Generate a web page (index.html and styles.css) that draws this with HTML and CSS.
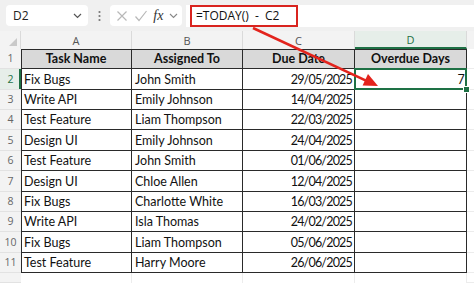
FILE: index.html
```html
<!DOCTYPE html>
<html>
<head>
<meta charset="utf-8">
<link rel="stylesheet" href="styles.css">
</head>
<body>
<div class="toolbar">
  <div class="namebox"><span>D2</span><svg class="chev" width="9" height="6" viewBox="0 0 9 6"><path d="M1 1l3.5 3.5L8 1" fill="none" stroke="#555" stroke-width="1.2"/></svg></div>
  <div class="dots"><svg width="3" height="12" viewBox="0 0 3 12"><circle cx="1.5" cy="2" r="1.1" fill="#777"/><circle cx="1.5" cy="6" r="1.1" fill="#777"/><circle cx="1.5" cy="10" r="1.1" fill="#777"/></svg></div>
  <div class="fxbox">
    <svg width="12" height="12" viewBox="0 0 12 12"><path d="M1.5 1.5l9 9M10.5 1.5l-9 9" stroke="#b8b8b8" stroke-width="1.2" fill="none"/></svg>
    <svg width="14" height="12" viewBox="0 0 14 12"><path d="M1.5 6.5l3.5 4L12.5 1" stroke="#b8b8b8" stroke-width="1.2" fill="none"/></svg>
    <span class="fx">fx</span>
    <svg class="chev" width="9" height="6" viewBox="0 0 9 6"><path d="M1 1l3.5 3.5L8 1" fill="none" stroke="#888" stroke-width="1.1"/></svg>
  </div>
  <div class="formula"><div class="hl">=TODAY() - C2</div></div>
</div>
<div class="sheet">
  <div class="lh corner"><svg width="8" height="8" viewBox="0 0 8 8"><path d="M8 0V8H0z" fill="#c9c9c9"/></svg></div>
  <div class="lh">A</div><div class="lh">B</div><div class="lh">C</div><div class="lh lsel">D</div><div class="lh end"></div>

  <div class="rn">1</div><div class="c a h">Task Name</div><div class="c h">Assigned To</div><div class="c h">Due Date</div><div class="c h">Overdue Days</div><div class="pad"></div>
  <div class="rn rsel">2</div><div class="c a">Fix Bugs</div><div class="c">John Smith</div><div class="c r">29/05/2025</div><div class="c r active">7</div><div class="pad"></div>
  <div class="rn">3</div><div class="c a">Write API</div><div class="c">Emily Johnson</div><div class="c r">14/04/2025</div><div class="c r"></div><div class="pad"></div>
  <div class="rn">4</div><div class="c a">Test Feature</div><div class="c">Liam Thompson</div><div class="c r">22/03/2025</div><div class="c r"></div><div class="pad"></div>
  <div class="rn">5</div><div class="c a">Design UI</div><div class="c">Emily Johnson</div><div class="c r">24/04/2025</div><div class="c r"></div><div class="pad"></div>
  <div class="rn">6</div><div class="c a">Test Feature</div><div class="c">John Smith</div><div class="c r">01/06/2025</div><div class="c r"></div><div class="pad"></div>
  <div class="rn">7</div><div class="c a">Design UI</div><div class="c">Chloe Allen</div><div class="c r">12/04/2025</div><div class="c r"></div><div class="pad"></div>
  <div class="rn">8</div><div class="c a">Fix Bugs</div><div class="c">Charlotte White</div><div class="c r">16/03/2025</div><div class="c r"></div><div class="pad"></div>
  <div class="rn">9</div><div class="c a">Write API</div><div class="c">Isla Thomas</div><div class="c r">24/02/2025</div><div class="c r"></div><div class="pad"></div>
  <div class="rn">10</div><div class="c a">Fix Bugs</div><div class="c">Liam Thompson</div><div class="c r">05/06/2025</div><div class="c r"></div><div class="pad"></div>
  <div class="rn">11</div><div class="c a">Test Feature</div><div class="c">Harry Moore</div><div class="c r">26/06/2025</div><div class="c r"></div><div class="pad"></div>
  <div class="rn"></div><div class="e"></div><div class="e"></div><div class="e"></div><div class="e"></div><div class="pad"></div>
</div>
<svg class="arrow" width="474" height="283" viewBox="0 0 474 283">
  <line x1="253" y1="28" x2="366" y2="80.6" stroke="#e3241d" stroke-width="2.6"/>
  <path d="M378 86L362.6 85.6L368 73.9z" fill="#e3241d"/>
</svg>
</body>
</html>
```
FILE: styles.css
```css
body {
  margin: 0;
  width: 474px;
  height: 283px;
  overflow: hidden;
  position: relative;
  background: #fff;
  font-family: Lato, "Open Sans", sans-serif;
}

.toolbar {
  height: 31px;
  background: #f0f0f0;
  display: flex;
  align-items: center;
}

.namebox {
  margin-left: 6px;
  width: 82px;
  height: 21px;
  background: #fff;
  border-radius: 4px;
  box-sizing: border-box;
  padding: 0 6px 0 7px;
  display: flex;
  align-items: center;
  justify-content: space-between;
  font: 12px "Open Sans", sans-serif;
  color: #222;
}

.dots {
  width: 22px;
  display: flex;
  justify-content: center;
}

.fxbox {
  width: 72px;
  height: 21px;
  background: #fff;
  border-radius: 4px;
  box-sizing: border-box;
  padding: 0 4px 0 6px;
  display: flex;
  align-items: center;
  justify-content: space-between;
}

.fx {
  font: italic 14px "Liberation Serif", serif;
  color: #333;
}

.formula {
  flex: 1;
  margin-left: 4px;
  height: 22px;
  background: #fff;
  display: flex;
}

.hl {
  margin-left: 4px;
  width: 108px;
  height: 22px;
  box-sizing: border-box;
  border: 2px solid #d9241f;
  padding: 0 0 0 4px;
  display: flex;
  align-items: center;
  font: 12px "Open Sans", sans-serif;
  word-spacing: 3px;
  color: #111;
  white-space: pre;
}

.sheet {
  display: grid;
  grid-template-columns: 21px 111px 111px 112px 112px 1fr;
  grid-template-rows: 18px repeat(11, 20.36px) 1fr;
  height: 252px;
}

.lh {
  background: #f3f3f3;
  border-right: 1px solid #dadada;
  display: flex;
  align-items: center;
  justify-content: center;
  font: 11px "Open Sans", sans-serif;
  color: #555;
  box-sizing: border-box;
}

.lh.corner {
  align-items: flex-end;
  justify-content: flex-end;
  padding: 0 3px 3px 0;
}

.lh.lsel {
  color: #1e7145;
  border-bottom: 2px solid #1e7145;
  background: #e6eee9;
}

.lh.end {
  border-right: none;
}

.rn {
  background: #f3f3f3;
  border-bottom: 1px solid #e2e2e2;
  display: flex;
  align-items: flex-end;
  justify-content: center;
  padding-bottom: 3px;
  box-sizing: border-box;
  font: 10.5px "Open Sans", sans-serif;
  color: #666;
}

.rn.rsel {
  color: #1e7145;
  background: #e6eee9;
  box-shadow: inset -2px 0 0 #1e7145;
}

.c {
  box-sizing: border-box;
  border-right: 1px solid #2a2a2a;
  border-bottom: 1px solid #2a2a2a;
  display: flex;
  align-items: flex-end;
  padding: 0 3px 2px 3px;
  font-size: 12.5px;
  color: #111;
  white-space: nowrap;
  overflow: hidden;
}

.c.a {
  border-left: 1px solid #2a2a2a;
  padding-left: 2px;
}

.c.h {
  border-top: 1px solid #2a2a2a;
  background: #d9d9d9;
  font-weight: bold;
  justify-content: center;
}

.c.r {
  justify-content: flex-end;
  padding-right: 2px;
  letter-spacing: -0.8px;
}

.c.active {
  position: relative;
  overflow: visible;
}

.c.active::before {
  content: "";
  position: absolute;
  left: -1px;
  top: -1px;
  right: -1px;
  bottom: -1px;
  border: 2px solid #1e7145;
}

.c.active::after {
  content: "";
  position: absolute;
  right: -4px;
  bottom: -4px;
  width: 5px;
  height: 5px;
  background: #1e7145;
  border: 1px solid #fff;
}

.pad {
  border-bottom: 1px solid #ececec;
}

.e {
  border-right: 1px solid #ececec;
}

.arrow {
  position: absolute;
  left: 0;
  top: 0;
  pointer-events: none;
}
```
